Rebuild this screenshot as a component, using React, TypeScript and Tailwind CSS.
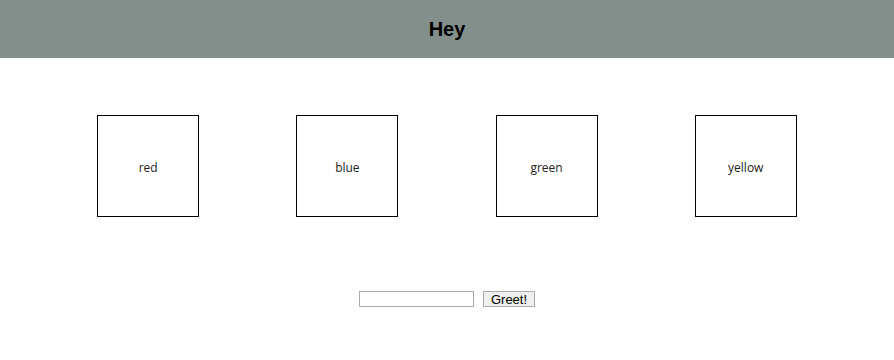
export default function App() {
  const colors = ['red', 'blue', 'green', 'yellow'];

  return (
    <div className="min-h-screen bg-white">
      {/* Header */}
      <div className="h-[58px] bg-[#828f8b] flex items-center justify-center">
        <h1 className="text-[20px] font-bold text-black font-['Liberation_Sans',Arial,sans-serif]">Hey</h1>
      </div>

      {/* Boxes */}
      <div className="flex justify-evenly mt-[57px]">
        {colors.map((c) => (
          <div
            key={c}
            className="w-[102px] h-[102px] border border-black flex items-center justify-center pt-[3px] text-[12px] text-[#222] font-['Open_Sans',sans-serif]"
          >
            {c}
          </div>
        ))}
      </div>

      {/* Greet form */}
      <div className="flex justify-center items-center gap-[9px] mt-[74px]">
        <input
          type="text"
          className="w-[115px] h-[16px] border border-[#aaa] bg-white"
        />
        <button className="w-[52px] h-[16px] border border-[#aaa] bg-[#efefef] text-[13px] leading-none text-black font-['Liberation_Sans',Arial,sans-serif]">
          Greet!
        </button>
      </div>
    </div>
  );
}
